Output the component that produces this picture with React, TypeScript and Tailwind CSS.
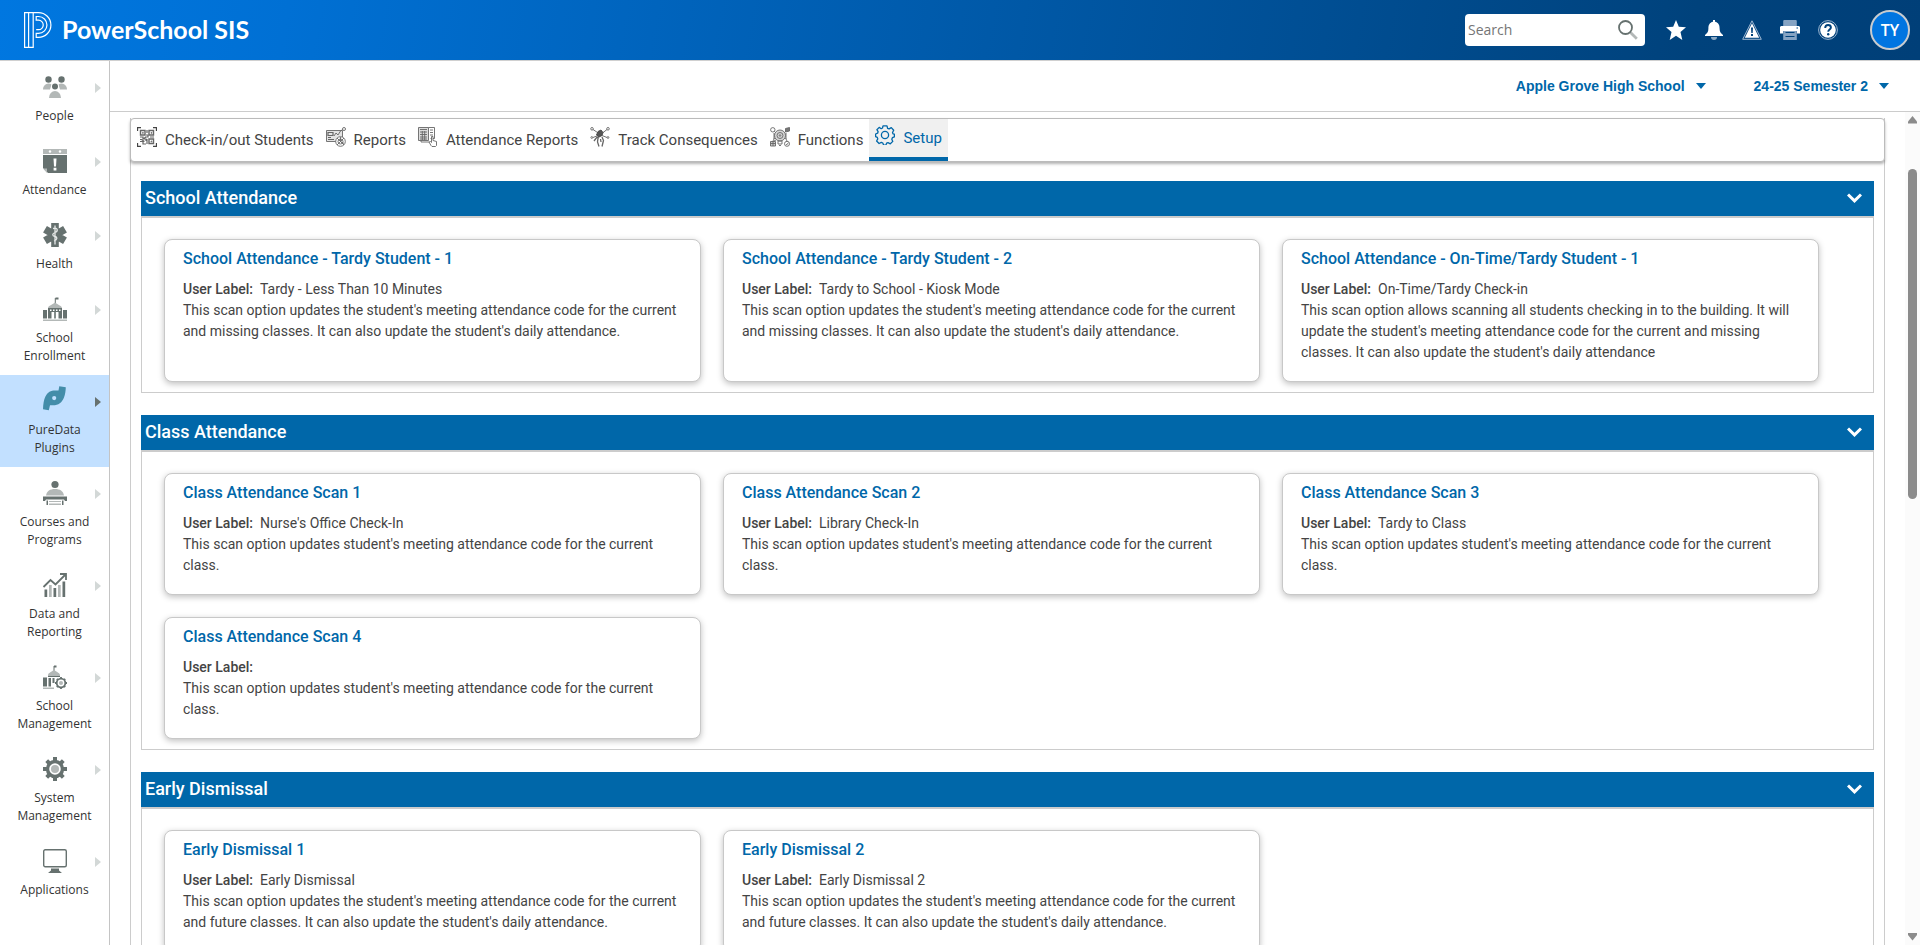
import { useState, type ReactNode } from 'react'

type NavItem = { label: string; icon: ReactNode; active?: boolean }
type Scan = { title: string; userLabel: string; description: string }
type ScanGroup = { name: string; scans: Scan[] }

const DARK = '#66716f'
const LIGHT = '#b3b8b7'

const NAV_ITEMS: NavItem[] = [
  {
    label: 'People',
    icon: (
      <>
        <path d="M0 14.500a5.500 6 0 0 1 8.500-5l-1.500 5zM24 14.500a5.500 6 0 0 0-8.500-5l1.500 5z" fill={LIGHT} />
        <path d="M6 23a6 7 0 0 1 12 0z" fill={LIGHT} />
        <circle cx="5.500" cy="4.500" r="3.200" fill={DARK} />
        <circle cx="18.500" cy="4.500" r="3.200" fill={DARK} />
        <circle cx="12" cy="11.500" r="3.800" fill="#fff" />
        <circle cx="12" cy="11.500" r="3" fill={DARK} />
      </>
    ),
  },
  {
    label: 'Attendance',
    icon: (
      <>
        <path d="M0 0h24v5H0z" fill={LIGHT} />
        <circle cx="7" cy="2.500" r="1.200" fill="#fff" />
        <circle cx="17" cy="2.500" r="1.200" fill="#fff" />
        <path d="M0 6h24v18H5l-5-5z" fill={DARK} />
        <path d="M0 19.500h4V24z" fill={LIGHT} />
        <path d="M10.500 9.500h3l-.5 8h-2zM10.600 18.800h2.800v2.700h-2.800z" fill="#fff" />
      </>
    ),
  },
  {
    label: 'Health',
    icon: (
      <>
        <path d="M12 0v24M2 6.200l20 11.600M22 6.200 2 17.800" stroke={DARK} strokeWidth="7.600" />
        <path d="M12 2.500v19M10 5.500c5.500-1.500 5 3 2 4s-3 3.500 0 4 2 3.500-1 4.500" fill="none" stroke="#e6e9e8" strokeWidth="1.300" />
      </>
    ),
  },
  {
    label: 'School Enrollment',
    icon: (
      <>
        <path d="M12.300 1v6" stroke={DARK} />
        <path d="M12.500.5h3v2h-3z" fill={DARK} />
        <path d="M5 11c.5-2.500 3-2.500 7-5.500 4 3 6.500 3 7 5.500z" fill={LIGHT} />
        <path d="M5 11h14v10.500h-3.500V15h-2.700v6.500h-1.600V15H8.500v6.500H5zM0 13h4v8.500H0zM20 13h4v8.500h-4z" fill={DARK} />
        <path d="M7 12.500h1.500V14H7zM10 12.500h1.500V14H10zM13 12.500h1.500V14H13zM16 12.500h1.500V14H16z" fill="#fff" />
        <path d="M0 22.500h24V24H0z" fill={LIGHT} />
      </>
    ),
  },
  {
    label: 'PureData Plugins',
    active: true,
    icon: (
      <path
        transform="translate(0 -3)"
        fillRule="evenodd"
        fill="#438da9"
        d="M16.300.3 22.800 1.200C22.600 5 22.300 8 21 11.500 19 16.500 15.500 19.300 10 19.300H7L5.800 24.300 0 23.300C.2 18 .8 14 2.300 10.800 4.500 6 8 4.500 12 4.500h3.500zM11.200 10a2.100 2.100 0 1 0 0 4.200 2.100 2.100 0 0 0 0-4.200z"
      />
    ),
  },
  {
    label: 'Courses and Programs',
    icon: (
      <>
        <circle cx="12" cy="3.500" r="3.600" fill={DARK} />
        <path d="M3 14.500c.8-4.500 4-6.500 9-6.500s8.200 2 9 6.500z" fill={LIGHT} />
        <path d="M0 15.500h24V20h-2l-1-1.500H3L2 20H0z" fill={DARK} />
        <path d="M6 20h12v1H6zM6 22.500h12V24H6z" fill={LIGHT} />
        <path d="M3.500 19.500h1.500V24H3.500zM19 19.500h1.500V24H19z" fill={DARK} />
      </>
    ),
  },
  {
    label: 'Data and Reporting',
    icon: (
      <>
        <path d="M1.500 16.500h2.700V24H1.500zM10.500 15h2.700v9h-2.700zM19.500 8.500h2.700V24h-2.700z" fill={DARK} />
        <path d="M6 12h2.700v12H6zM15 12h2.700v12H15z" fill={LIGHT} />
        <path d="M.5 14 7.500 7l5 4.500L22 2M17 1h6v6" fill="none" stroke={DARK} strokeWidth="1.800" />
      </>
    ),
  },
  {
    label: 'School Management',
    icon: (
      <>
        <path d="M11 1v5" stroke={DARK} />
        <path d="M11 .5h2.500v2H11z" fill={DARK} />
        <path d="M5 10c.5-2.500 2.500-2 6-5.500 3.500 3.500 5.500 3 6 5.500z" fill={LIGHT} />
        <path d="M5 10.500h12V12H5zM5.500 13H8v8.500H5.500zM9.500 13h2v5h-2zM0 12.500h4v9H0z" fill={DARK} />
        <path d="M0 22.500h11V24H0z" fill={LIGHT} />
        <circle cx="18" cy="18" r="4.300" fill="#fff" stroke={DARK} strokeWidth="1.800" />
        <circle cx="18" cy="18" r="2" fill={LIGHT} />
        <path d="M18 12v2M18 22v2M12 18h2M22 18h2M13.800 13.800l1.300 1.300M20.900 20.900l1.300 1.300M13.800 22.200l1.300-1.300M20.900 15.100l1.300-1.300" stroke={DARK} strokeWidth="1.800" />
      </>
    ),
  },
  {
    label: 'System Management',
    icon: (
      <>
        <circle cx="12" cy="12" r="7.500" fill="none" stroke={DARK} strokeWidth="3.400" />
        <circle cx="12" cy="12" r="4" fill={LIGHT} />
        <path d="M12 0v4M12 20v4M0 12h4M20 12h4M3.700 3.700l2.800 2.800M17.500 17.500l2.800 2.800M3.700 20.300l2.800-2.800M17.500 6.500l2.800-2.800" stroke={DARK} strokeWidth="4" />
      </>
    ),
  },
  {
    label: 'Applications',
    icon: (
      <>
        <rect x=".7" y=".7" width="22.600" height="17" rx="1.500" fill="#fff" stroke={DARK} strokeWidth="1.400" />
        <path d="M8 19.500h8v2l3 2.500H5l3-2.500z" fill={DARK} />
      </>
    ),
  },
]

const TABS: { label: string; icon: ReactNode }[] = [
  {
    label: 'Check-in/out Students',
    icon: (
      <>
        <path d="M.5 4V.5H4M16 .5h3.500V4M19.500 16v3.500H16M4 19.500H.5V16" strokeWidth="1.300" stroke="#444" />
        <path d="M3.500 3.500h4.500V8H3.500zM12 3.500h4.500V8H12zM12 12h4.500v4.500H12z" strokeWidth="1.400" />
        <path d="M5.500 5.500h.8v.8h-.8zM14 5.500h.8v.8H14zM14 14h.8v.8H14z" />
        <path d="M10 3v3M9 8h2v2H8M3 10h3v2h3v2M3 12.500h1.500l3 2M3 14.500h3v2.500h3M10 12v5M13 10h4M6 12l3-2" strokeWidth="1.200" />
      </>
    ),
  },
  {
    label: 'Reports',
    icon: (
      <>
        <path d="M.5 3.500h16v11H.5z" fill="#e3e3e3" />
        <path d="M2 5.500h5v3H2zM2 10.500h3M2 12.500h6" strokeWidth="1.200" />
        <path d="m8 9 2-3 2 2 2.500-4 3-2" />
        <circle cx="18" cy="2" r="1.500" fill="#fff" />
        <circle cx="14.500" cy="14.500" r="4.800" fill="#fff" />
        <circle cx="14.500" cy="14.500" r="2.500" />
        <path d="M14.500 10v4.500l3.500 2M11 11l7 7M18 11l-7 7" />
      </>
    ),
  },
  {
    label: 'Attendance Reports',
    icon: (
      <>
        <path d="M.5.5h10v13H.5z" fill="#ddd" />
        <path d="M2 2.500h7M2 5h7M2 7.500h7M2 10h7M2 12h7M4.300 4v9M6.700 4v9" />
        <path d="M10.500.5h6v11h-4M12 3h3M12 5.500h3M12 8h3M3 13.500v1.500h8" />
        <path d="M13 18.500 11 15l1.500-.5 1 1V9.500h1.500v4l3.500 1v4l-1 1h-3.500z" fill="#fff" />
      </>
    ),
  },
  {
    label: 'Track Consequences',
    icon: (
      <>
        <path d="m3 2.500 4.500 3M17 2.500 12.500 6M3 10.500l5-2M17 10.500l-5-2" />
        <circle cx="2" cy="1.800" r="1.300" />
        <circle cx="18" cy="1.800" r="1.300" />
        <circle cx="1.800" cy="10.500" r=".9" />
        <circle cx="18" cy="10.500" r=".9" />
        <path d="M8 4.500 11 3l2 2.500-1 3-3 1.500L6.500 8z" fill="#555" stroke="#444" />
        <path d="m4 14 3-4 2 1M8 11l-.5 4 1.500 4.500M12 10l1.500 3.500L12 19.500M10.500 12l.5 3" strokeWidth="1.300" />
      </>
    ),
  },
  {
    label: 'Functions',
    icon: (
      <>
        <circle cx="10" cy="8.500" r="5.500" fill="#d4d4d4" />
        <circle cx="10" cy="8.500" r="3" />
        <circle cx="10" cy="8.500" r=".8" />
        <path d="M8 14h4v3H8zM9 18.500h2M5 5 3 3M15 5l2-2M4.500 11 2.500 15M15.500 11l2 4M4 6v6M16 6v6M6 13l-2 1" />
        <circle cx="2.800" cy="2.800" r="2.200" fill="#fff" />
        <path d="M15.500 1.500 19.500.5V4l-4 1z" fill="#777" />
        <path d="M.5 14.500h5v4.500h-5zM.5 16.500h5M3 14.500V19" fill="#ccc" />
        <circle cx="17" cy="16.800" r="2.500" fill="#fff" />
        <path d="m16 17 .8.800 1.500-2" />
      </>
    ),
  },
  {
    label: 'Setup',
    icon: (
      <>
        <circle cx="10" cy="10" r="3.600" strokeWidth="1.300" />
        <path
          strokeWidth="1.300"
          strokeLinejoin="round"
          d="M8 .9h4l.6 2.400 1.500.6 2.200-1.300 2.400 2.700-1.200 2.200.5 1.300 1.400.4v2.600l-2 .9-.6 1.500 1 2.200-2.500 2.400-2.300-1.100-1.400.5-.7 1.900H8.600l-.8-2.100-1.500-.6-2.200 1.100-2.500-2.500 1.200-2.100-.5-1.500-1.700-.8V9l2-.8.5-1.500-1.200-2L4.200 2.400l2 1.300L7.500 3z"
        />
      </>
    ),
  },
]

const GROUPS: ScanGroup[] = [
  {
    name: 'School Attendance',
    scans: [
      {
        title: 'School Attendance - Tardy Student - 1',
        userLabel: 'Tardy - Less Than 10 Minutes',
        description: "This scan option updates the student's meeting attendance code for the current and missing classes. It can also update the student's daily attendance.",
      },
      {
        title: 'School Attendance - Tardy Student - 2',
        userLabel: 'Tardy to School - Kiosk Mode',
        description: "This scan option updates the student's meeting attendance code for the current and missing classes. It can also update the student's daily attendance.",
      },
      {
        title: 'School Attendance - On-Time/Tardy Student - 1',
        userLabel: 'On-Time/Tardy Check-in',
        description: "This scan option allows scanning all students checking in to the building. It will update the student's meeting attendance code for the current and missing classes. It can also update the student's daily attendance",
      },
    ],
  },
  {
    name: 'Class Attendance',
    scans: ["Nurse's Office Check-In", 'Library Check-In', 'Tardy to Class', ''].map((userLabel, i) => ({
      title: `Class Attendance Scan ${i + 1}`,
      userLabel,
      description: "This scan option updates student's meeting attendance code for the current class.",
    })),
  },
  {
    name: 'Early Dismissal',
    scans: ['Early Dismissal', 'Early Dismissal 2'].map((userLabel, i) => ({
      title: `Early Dismissal ${i + 1}`,
      userLabel,
      description: "This scan option updates the student's meeting attendance code for the current and future classes. It can also update the student's daily attendance.",
    })),
  },
]

function Logo() {
  return (
    <svg width="28" height="36" viewBox="0 0 28 36" fill="none" stroke="#fff" strokeWidth="1.200">
      <path d="M.6.600h4v34.800h-4zM4.600 35.400h4.600V.600H4.600" />
      <path d="M9.200.600H14.500a12.400 12.400 0 0 1 0 24.800h-2.300v-4h2.300a8.400 8.400 0 0 0 0-16.900h-2.300v3.700h2.300a4.700 4.700 0 0 1 0 9.500h-2.300" />
    </svg>
  )
}

function TopBar() {
  return (
    <header className="flex h-[61px] shrink-0 items-center border-b border-[#d0d0d0] bg-[linear-gradient(100deg,#0077e0_0%,#0070d4_15%,#00427c_88%,#003f78_100%)] pl-6 pr-2.5">
      <Logo />
      <span className="ml-2.5 font-['Lato',sans-serif] text-[25px] font-bold text-white">PowerSchool SIS</span>
      <form className="ml-auto flex h-8 w-[180px] items-center rounded bg-white pl-[3px] pr-[7px]" onSubmit={e => e.preventDefault()}>
        <input
          type="text"
          aria-label="Search"
          placeholder="Search"
          className="min-w-0 flex-1 font-['Open_Sans',sans-serif] text-sm text-[#333] outline-none placeholder:text-[#757575]"
        />
        <button type="submit" aria-label="Run search">
          <svg width="20" height="20" viewBox="0 0 20 20" fill="none">
            <path d="m12.500 12.500 6.300 6.300" stroke={LIGHT} strokeWidth="2.800" />
            <circle cx="7.500" cy="7.500" r="6.500" stroke={DARK} strokeWidth="1.800" />
          </svg>
        </button>
      </form>
      <div className="ml-[21px] flex items-center gap-[18px]">
        <button type="button" aria-label="Favorites">
          <svg width="20" height="20" viewBox="0 0 20 20" fill="#fff">
            <path d="m10 0 2.800 6.800 7.200.5-5.500 4.700 1.800 8L10 15.800 3.700 20 5.500 12 0 7.300l7.200-.5z" />
          </svg>
        </button>
        <button type="button" aria-label="Notifications">
          <svg width="20" height="20" viewBox="0 0 20 20" fill="#fff">
            <path d="M9 0h2v1.800c3.500.7 4.600 3.400 4.600 6.700 0 3 .9 4.500 3.400 6.500v1H1v-1c2.500-2 3.400-3.500 3.400-6.500C4.400 5.200 5.500 2.500 9 1.800z" />
            <path d="M7 17h6a3 3 0 0 1-6 0z" opacity=".55" />
          </svg>
        </button>
        <button type="button" aria-label="Alerts">
          <svg width="20" height="20" viewBox="0 0 20 20">
            <path d="M10 .8 19.300 19.300H.7z" fill="none" stroke="#9db7d1" strokeLinejoin="round" />
            <path d="m10 3.200 7.200 14.600H2.800z" fill="#fff" />
            <path d="M9 7.500h2l-.3 5.500H9.300zM9 14h2v2H9z" fill="#00427c" />
          </svg>
        </button>
        <button type="button" aria-label="Print">
          <svg width="20" height="20" viewBox="0 0 20 20">
            <path d="M4 0h12l.8.800V6H3.200V.800z" fill="#85a3c3" />
            <path d="M1 6h18l1 1v6.500h-3V11H3v2.500H0V7z" fill="#fff" />
            <path d="M3.200 11h13.600v9H3.200z" fill="#85a3c3" />
            <path d="M5.500 12.500h9M5.500 16.500h9" stroke="#00427c" />
            <path d="M16.500 8h1.500" stroke="#00427c" />
          </svg>
        </button>
        <button type="button" aria-label="Help">
          <svg width="20" height="20" viewBox="0 0 20 20">
            <circle cx="10" cy="10" r="9.400" fill="none" stroke="#9db7d1" />
            <circle cx="10" cy="10" r="7.800" fill="#fff" />
            <path d="M7.200 8c0-2 1.200-3 2.900-3s2.800 1 2.800 2.500c0 2-2.700 2-2.700 4.300" fill="none" stroke="#00427c" strokeWidth="1.900" />
            <circle cx="10.200" cy="14.300" r="1.200" fill="#00427c" />
          </svg>
        </button>
      </div>
      <button
        type="button"
        className="ml-8 size-10 rounded-full border-2 border-[#c8ccd0] bg-[#0075e1] font-['Open_Sans',sans-serif] text-base font-semibold leading-none text-white"
      >
        TY
      </button>
    </header>
  )
}

function SideNav() {
  return (
    <nav className="w-[110px] shrink-0 border-r border-[#c4c4c4] bg-white">
      {NAV_ITEMS.map(item => (
        <a
          key={item.label}
          href="#"
          className={`relative flex flex-col items-center pb-2.5 pt-3.5 text-center font-['Open_Sans',sans-serif] text-xs leading-[18px] text-[#333] ${
            item.active ? 'bg-[#c2e0ff]' : ''
          }`}
        >
          <svg width="24" height="24" viewBox="0 0 24 24" className="mb-2 overflow-visible">{item.icon}</svg>
          <span className="w-20">{item.label}</span>
          <svg width="6" height="10" viewBox="0 0 6 10" className="absolute right-2 top-[22px]">
            <path d="M0 0l6 5-6 5z" fill={item.active ? '#66716f' : '#d3d8d7'} />
          </svg>
        </a>
      ))}
    </nav>
  )
}

function ContextPicker({ label }: { label: string }) {
  return (
    <button type="button" aria-haspopup="dialog" className="flex items-center gap-[11px] font-['Liberation_Sans',sans-serif] text-sm font-bold text-[#0067a9]">
      {label}
      <svg width="10" height="6" viewBox="0 0 10 6">
        <path d="M0 0h10L5 6z" fill="#0067a9" />
      </svg>
    </button>
  )
}

function TabBar({ active, onSelect }: { active: string; onSelect: (tab: string) => void }) {
  return (
    <div role="tablist" className="-mx-px flex h-11 rounded-[4px] border border-[#bbb] bg-white shadow-[0_2px_3px_rgba(0,0,0,0.3)]">
      {TABS.map(tab => {
        const selected = tab.label === active
        return (
          <button
            key={tab.label}
            type="button"
            role="tab"
            aria-selected={selected}
            onClick={() => onSelect(tab.label)}
            className={`flex items-center gap-2 px-1.5 text-[15px] ${
              selected ? 'border-b-4 border-[#0067a9] bg-[#f0f0f0] text-[#0067a9]' : 'text-[#444]'
            }`}
          >
            <svg width="20" height="20" viewBox="0 0 20 20" fill="none" stroke={selected ? '#0067a9' : '#666'} strokeWidth=".9" className="mb-1.5">
              {tab.icon}
            </svg>
            {tab.label}
          </button>
        )
      })}
    </div>
  )
}

function ScanCard({ scan }: { scan: Scan }) {
  return (
    <article className="rounded-lg border border-[#c8c8c8] bg-white px-[18px] pb-[18px] pt-[7px] shadow-[0_2px_6px_rgba(0,0,0,0.25)]">
      <h3 className="mb-2 text-base font-medium leading-6">
        <a href="#" className="text-[#0067a9] hover:underline">{scan.title}</a>
      </h3>
      <div className="text-sm leading-[21px] text-[#444]">
        <p>
          <span className="mr-[7px] font-medium">User Label:</span>
          {scan.userLabel}
        </p>
        <p>{scan.description}</p>
      </div>
    </article>
  )
}

function ScanSection({ group }: { group: ScanGroup }) {
  const [open, setOpen] = useState(true)

  return (
    <section className="mb-[22px]">
      <h2>
        <button
          type="button"
          aria-expanded={open}
          onClick={() => setOpen(!open)}
          className="flex h-[35px] w-full items-center justify-between bg-[#0067a9] pb-px pl-1 pr-3 text-lg font-medium text-white"
        >
          {group.name}
          <svg width="15" height="10" viewBox="0 0 15 10" fill="none" stroke="#fff" strokeWidth="3">
            <path d="m1 1.500 6.500 6.300L14 1.500" />
          </svg>
        </button>
      </h2>
      {open && (
        <div className="grid grid-cols-3 gap-[22px] border border-t-2 border-[#ccc] pb-2.5 pl-[22px] pr-[54px] pt-[21px]">
          {group.scans.map(scan => <ScanCard key={scan.title} scan={scan} />)}
        </div>
      )}
    </section>
  )
}

function ScrollRail() {
  return (
    <div className="flex w-[15px] shrink-0 flex-col items-center bg-[#fbfbfb] py-1" aria-hidden="true">
      <svg width="9" height="8" viewBox="0 0 9 8"><path d="M4.500 0 9 5.500V7.500H0V5.500z" fill="#8b8b8b" /></svg>
      <div className="h-[45px]" />
      <div className="h-2/5 w-[9px] rounded-full bg-[#8b8b8b]" />
      <svg width="9" height="8" viewBox="0 0 9 8" className="mt-auto"><path d="M4.500 7.500 9 2V0H0v2z" fill="#8b8b8b" /></svg>
    </div>
  )
}

export default function App() {
  const [tab, setTab] = useState('Setup')

  return (
    <div className="flex h-screen flex-col overflow-hidden bg-white font-['Roboto',sans-serif]">
      <TopBar />
      <div className="flex min-h-0 flex-1">
        <SideNav />
        <div className="flex min-w-0 flex-1 flex-col">
          <div className="flex h-[51px] shrink-0 items-center justify-end gap-12 border-b border-[#ccc] pr-[31px]">
            <ContextPicker label="Apple Grove High School" />
            <ContextPicker label="24-25 Semester 2" />
          </div>
          <div className="flex min-h-0 flex-1">
            <main className="min-w-0 flex-1 overflow-hidden px-5 pt-1.5">
              <div className="border-x border-[#ccc]">
                <TabBar active={tab} onSelect={setTab} />
                <div className="px-2.5 pt-[19px]">
                  {GROUPS.map(group => <ScanSection key={group.name} group={group} />)}
                </div>
              </div>
            </main>
            <ScrollRail />
          </div>
        </div>
      </div>
    </div>
  )
}
